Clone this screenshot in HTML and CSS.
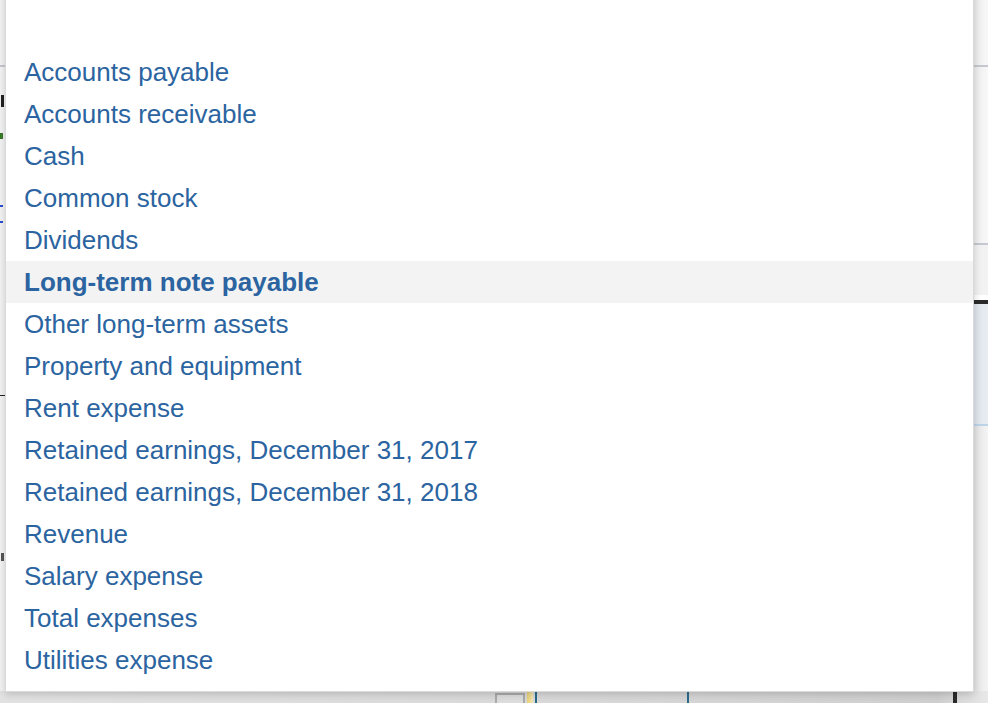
FILE: index.html
```html
<!DOCTYPE html>
<html>
<head>
<meta charset="utf-8">
<link rel="stylesheet" href="styles.css">
</head>
<body>
<div class="page">
  <div class="left-strip">
    <div class="ls-line ls-a"></div>
    <div class="ls-mark ls-b"></div>
    <div class="ls-green"></div>
    <div class="ls-blue"></div>
    <div class="ls-line ls-c"></div>
    <div class="ls-mark ls-d"></div>
  </div>
  <div class="right-strip">
    <div class="rs-top"></div>
    <div class="rs-mid"></div>
    <div class="rs-bar"></div>
    <div class="rs-blue"></div>
    <div class="rs-rest"></div>
  </div>
  <div class="bottom-strip">
    <div class="bs-box"></div>
    <div class="bs-yellow"></div>
    <div class="bs-blue b1"></div>
    <div class="bs-blue b2"></div>
    <div class="bs-dark"></div>
  </div>
</div>
<ul class="menu">
  <li class="item">Accounts payable</li>
  <li class="item">Accounts receivable</li>
  <li class="item">Cash</li>
  <li class="item">Common stock</li>
  <li class="item">Dividends</li>
  <li class="item active">Long-term note payable</li>
  <li class="item">Other long-term assets</li>
  <li class="item">Property and equipment</li>
  <li class="item">Rent expense</li>
  <li class="item">Retained earnings, December 31, 2017</li>
  <li class="item">Retained earnings, December 31, 2018</li>
  <li class="item">Revenue</li>
  <li class="item">Salary expense</li>
  <li class="item">Total expenses</li>
  <li class="item">Utilities expense</li>
</ul>
</body>
</html>
```
FILE: styles.css
```css
html, body {
  margin: 0;
  padding: 0;
}
body {
  width: 988px;
  height: 703px;
  overflow: hidden;
  position: relative;
  background: #ededed;
  font-family: "Liberation Sans", Arial, sans-serif;
}
.page {
  position: absolute;
  inset: 0;
}
.left-strip {
  position: absolute;
  left: 0;
  top: 0;
  width: 6px;
  height: 691px;
  background: #f4f4f4;
}
.ls-line {
  position: absolute;
  left: 0;
  width: 6px;
  height: 2px;
  background: #c8c8d0;
}
.ls-a { top: 65px; }
.ls-c { top: 395px; background: #222; height: 1px; }
.ls-mark {
  position: absolute;
  left: 1px;
  width: 3px;
  height: 12px;
  background: #222;
}
.ls-b { top: 95px; }
.ls-d { top: 553px; height: 8px; background: #555; }
.ls-green {
  position: absolute;
  left: 0; top: 133px;
  width: 3px; height: 6px;
  background: #3a7a2a;
}
.ls-blue {
  position: absolute;
  left: 0; top: 205px;
  width: 3px; height: 18px;
  border-top: 2px solid #2a4fd0;
  border-bottom: 2px solid #2a4fd0;
  box-sizing: border-box;
}
.right-strip {
  position: absolute;
  right: 0;
  top: 0;
  width: 15px;
  height: 691px;
  display: flex;
  flex-direction: column;
  background: linear-gradient(to right, #e6e6e6, #f6f6f6);
}
.rs-top {
  height: 65px;
  border-bottom: 2px solid #c6c8d0;
  background: linear-gradient(to right, #ebebeb, #f8f8f8);
}
.rs-mid {
  height: 176px;
  border-bottom: 2px solid #c6c8d0;
  background: linear-gradient(to right, #ececec, #f8f8f8);
}
.rs-bar {
  height: 55px;
  background: linear-gradient(to bottom, #f2f2f2 0, #f2f2f2 50px, #fff 50px);
  border-bottom: 4px solid #2a2a2a;
  position: relative;
}
.rs-blue {
  height: 120px;
  background: linear-gradient(to right, #dde2ea, #e9edf3);
  border-bottom: 2px solid #bcd3ea;
}
.rs-rest {
  flex: 1;
  background: linear-gradient(to right, #e2e2e2, #f4f4f4);
}
.bottom-strip {
  position: absolute;
  left: 0;
  right: 0;
  bottom: 0;
  height: 12px;
  background: linear-gradient(to right, #e2e2e2, #d8d8d8 60%, #cfcfcf 95%, #e8e8e8);
}
.bs-box {
  position: absolute;
  left: 495px; top: 2px;
  width: 30px; height: 10px;
  border: 2px solid #aaa;
  border-bottom: none;
  box-sizing: border-box;
  background: #ddd;
}
.bs-yellow {
  position: absolute;
  left: 527px; top: 0;
  width: 6px; height: 12px;
  background: linear-gradient(to right, #e8d070, #f2e6b8);
}
.bs-blue {
  position: absolute;
  top: 0;
  width: 2px; height: 12px;
  background: #2a6a8a;
}
.b1 { left: 535px; }
.b2 { left: 687px; }
.bs-dark {
  position: absolute;
  left: 953px; top: 0;
  width: 4px; height: 12px;
  background: #2a2a2a;
}
.menu {
  position: absolute;
  left: 5px;
  top: -11px;
  width: 967px;
  margin: 0;
  padding: 61px 0 10px;
  list-style: none;
  background: #fff;
  border: 1px solid #dadada;
  box-shadow: 0 2px 8px rgba(0, 0, 0, 0.18);
}
.item {
  height: 42px;
  line-height: 42px;
  padding-left: 18px;
  font-size: 26px;
  color: #2b64a0;
  white-space: nowrap;
}
.item.active {
  background: #f3f3f3;
  font-weight: bold;
}
```
